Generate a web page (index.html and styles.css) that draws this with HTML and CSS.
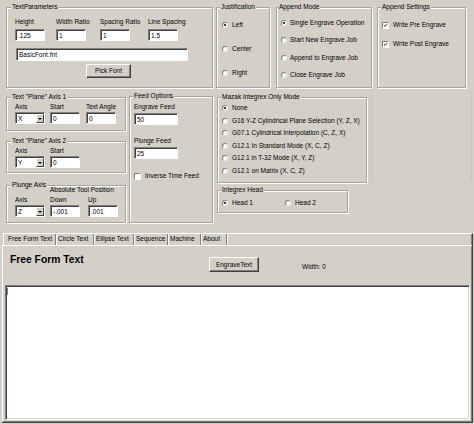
FILE: index.html
```html
<!DOCTYPE html>
<html>
<head>
<meta charset="utf-8">
<title>Engrave</title>
<link rel="stylesheet" href="styles.css">
</head>
<body>
<div class="row1">
  <div class="group g-tp">
    <div class="legend">TextParameters</div>
    <div class="tp-grid">
      <div class="lbl">Height</div>
      <div class="lbl">Width Ratio</div>
      <div class="lbl">Spacing Ratio</div>
      <div class="lbl">Line Spacing</div>
      <div class="tb w30">.125</div>
      <div class="tb w30">1</div>
      <div class="tb w30">1</div>
      <div class="tb w30">1.5</div>
    </div>
    <div class="tb font-in">BasicFont.fnt</div>
    <div class="btn pick">Pick Font</div>
  </div>
  <div class="group g-just">
    <div class="legend">Justification</div>
    <div class="radios">
      <div class="opt"><span class="radio on"></span>Left</div>
      <div class="opt"><span class="radio"></span>Center</div>
      <div class="opt"><span class="radio"></span>Right</div>
    </div>
  </div>
  <div class="group g-append">
    <div class="legend">Append Mode</div>
    <div class="radios">
      <div class="opt"><span class="radio on"></span>Single Engrave Operation</div>
      <div class="opt"><span class="radio"></span>Start New Engrave Job</div>
      <div class="opt"><span class="radio"></span>Append to Engrave Job</div>
      <div class="opt"><span class="radio"></span>Close Engrave Job</div>
    </div>
  </div>
  <div class="group g-aset">
    <div class="legend">Append Settings</div>
    <div class="radios">
      <div class="opt"><span class="chk"><svg viewBox="0 0 7 7"><polyline points="1.2,3.2 2.8,4.8 5.8,1.6" fill="none" stroke="#000" stroke-width="1.2"/></svg></span>Write Pre Engrave</div>
      <div class="opt"><span class="chk"><svg viewBox="0 0 7 7"><polyline points="1.2,3.2 2.8,4.8 5.8,1.6" fill="none" stroke="#000" stroke-width="1.2"/></svg></span>Write Post Engrave</div>
    </div>
  </div>
</div>

<div class="row2">
  <div class="col-left">
    <div class="group g-ax1">
      <div class="legend">Text "Plane" Axis 1</div>
      <div class="ax-grid">
        <div class="lbl">Axis</div>
        <div class="lbl">Start</div>
        <div class="lbl">Text Angle</div>
        <div class="tb sel">X<span class="dd"></span></div>
        <div class="tb w30">0</div>
        <div class="tb w30">0</div>
      </div>
    </div>
    <div class="group g-ax2">
      <div class="legend">Text "Plane" Axis 2</div>
      <div class="ax-grid">
        <div class="lbl">Axis</div>
        <div class="lbl">Start</div>
        <div class="lbl"></div>
        <div class="tb sel">Y<span class="dd"></span></div>
        <div class="tb w30">0</div>
      </div>
    </div>
    <div class="group g-plunge">
      <div class="legend">Plunge Axis</div>
      <div class="atp">Absolute Tool Position</div>
      <div class="ax-grid pl-grid">
        <div class="lbl">Axis</div>
        <div class="lbl">Down</div>
        <div class="lbl">Up</div>
        <div class="tb sel">Z<span class="dd"></span></div>
        <div class="tb w30">-.001</div>
        <div class="tb w30">.001</div>
      </div>
    </div>
  </div>

  <div class="group g-feed">
    <div class="legend">Feed Options</div>
    <div class="feed-body">
      <div class="lbl f-l1">Engrave Feed</div>
      <div class="tb feed-in">50</div>
      <div class="lbl f-l2">Plunge Feed</div>
      <div class="tb feed-in">25</div>
      <div class="opt f-chk"><span class="chk"></span>Inverse Time Feed</div>
    </div>
  </div>

  <div class="col-mid">
    <div class="group g-mazak">
      <div class="legend">Mazak Integrex Only Mode</div>
      <div class="radios">
        <div class="opt"><span class="radio on"></span>None</div>
        <div class="opt"><span class="radio"></span>G16 Y-Z Cylindrical Plane Selection (Y, Z, X)</div>
        <div class="opt"><span class="radio"></span>G07.1 Cylindrical Interpolation (C, Z, X)</div>
        <div class="opt"><span class="radio"></span>G12.1 In Standard Mode (X, C, Z)</div>
        <div class="opt"><span class="radio"></span>G12.1 in T-32 Mode (X, Y, Z)</div>
        <div class="opt"><span class="radio"></span>G12.1 on Matrix (X, C, Z)</div>
      </div>
    </div>
    <div class="group g-head">
      <div class="legend">Integrex Head</div>
      <div class="head-row">
        <div class="opt h1"><span class="radio on"></span>Head 1</div>
        <div class="opt"><span class="radio"></span>Head 2</div>
      </div>
    </div>
  </div>

  <div class="col-right"></div>
</div>

<div class="tabctl">
  <div class="tabs">
    <div class="tab t1 active">Free Form Text</div>
    <div class="tab t2">Circle Text</div>
    <div class="tab t3">Ellipse Text</div>
    <div class="tab t4">Sequence</div>
    <div class="tab t5">Machine</div>
    <div class="tab t6">About</div>
  </div>
  <div class="panel">
    <div class="panel-top">
      <div class="heading">Free Form Text</div>
      <div class="btn engrave">EngraveText</div>
      <div class="width-lbl">Width: 0</div>
    </div>
    <div class="textarea"><span class="caret"></span></div>
  </div>
</div>
</body>
</html>
```

FILE: styles.css
```css
* { box-sizing: border-box; }
html, body { margin: 0; padding: 0; }
body {
  width: 474px;
  height: 424px;
  overflow: hidden;
  background: #d4d0c8;
  font-family: "Liberation Sans", Arial, sans-serif;
  font-size: 6.5px;
  line-height: 8px;
  color: #000;
}

/* generic controls */
.group {
  border: 1px solid #a9a59d;
  box-shadow: inset 1px 1px 0 #fff, 1px 1px 0 #fff;
}
.legend {
  width: max-content;
  height: 8px;
  line-height: 8px;
  margin-top: -5px;
  margin-left: 3px;
  padding: 0 1px;
  background: #d4d0c8;
  white-space: nowrap;
}
.lbl { height: 8px; white-space: nowrap; }
.tb {
  height: 12px;
  background: #fff;
  border: 1px solid;
  border-color: #808080 #fff #fff #808080;
  box-shadow: inset 1px 1px 0 #404040;
  padding: 2px 0 0 2px;
  line-height: 8px;
  white-space: nowrap;
  overflow: hidden;
}
.w30 { width: 30px; }
.sel { width: 30px; position: relative; }
.dd {
  position: absolute;
  right: 0;
  top: 1px;
  width: 8px;
  height: 9px;
  background: #d4d0c8;
  border: 1px solid;
  border-color: #fff #404040 #404040 #fff;
}
.dd::after {
  content: "";
  position: absolute;
  left: 1px;
  top: 3px;
  border-left: 2px solid transparent;
  border-right: 2px solid transparent;
  border-top: 2px solid #000;
}
.btn {
  display: flex;
  align-items: center;
  justify-content: center;
  background: #d4d0c8;
  border: 1px solid;
  border-color: #fff #404040 #404040 #fff;
  box-shadow: inset -1px -1px 0 #808080;
  white-space: nowrap;
}
.radios { display: flex; flex-direction: column; }
.opt {
  display: flex;
  align-items: center;
  height: 8px;
  gap: 4px;
  white-space: nowrap;
}
.radio {
  flex: none;
  width: 6px;
  height: 6px;
  border-radius: 50%;
  background: #fff;
  border: 1px solid;
  border-color: #808080 #e8e8e8 #e8e8e8 #808080;
  position: relative;
}
.radio.on::after {
  content: "";
  position: absolute;
  left: 1px;
  top: 1px;
  width: 2px;
  height: 2px;
  border-radius: 50%;
  background: #000;
}
.chk {
  flex: none;
  width: 7px;
  height: 7px;
  background: #fff;
  border: 1px solid;
  border-color: #808080 #fff #fff #808080;
  display: flex;
}
.chk svg { width: 5px; height: 5px; display: block; }

/* row 1 */
.row1 {
  display: flex;
  align-items: stretch;
  height: 81px;
  margin-top: 7px;
  padding-left: 6px;
}
.g-tp { width: 207px; margin-right: 3px; }
.g-tp .legend { margin-left: 4px; }
.tp-grid {
  display: grid;
  grid-template-columns: 41px 44px 48px 40px;
  row-gap: 3px;
  margin: 7px 0 0 8px;
}
.font-in { width: 172px; height: 13px; margin: 7px 0 0 9px; }
.pick { width: 45px; height: 14px; margin: 3px 0 0 79px; }

.g-just { width: 54px; margin-right: 6px; }
.g-just .radios { margin-top: 10px; padding-left: 5px; gap: 16px; }

.g-append { width: 96px; margin-right: 5px; }
.g-append .legend { margin-left: 1px; }
.g-append .radios { margin-top: 8px; padding-left: 4px; gap: 9.33px; }
.g-append .opt { gap: 3px; }

.g-aset { width: 89px; }
.g-aset .radios { margin-top: 10px; padding-left: 4px; gap: 11px; }

/* row 2 */
.row2 {
  display: flex;
  align-items: flex-start;
  margin-top: 8px;
  padding-left: 6px;
}
.col-left { width: 120px; display: flex; flex-direction: column; }
.g-ax1 { margin-top: 1px; height: 34px; }
.g-ax2 { margin-top: 10px; height: 32px; }
.g-plunge { margin-top: 12px; height: 38px; }
.col-left .legend { margin-left: 4px; }
.ax-grid {
  display: grid;
  grid-template-columns: 35px 36px 30px;
  row-gap: 1px;
  margin: 2px 0 0 8px;
}
.atp { margin: -3px 0 0 43px; height: 8px; white-space: nowrap; }
.pl-grid { grid-template-columns: 35px 38px 30px; }

.g-feed { margin-left: 3px; width: 84px; height: 127px; }
.feed-body { padding-left: 4px; }
.f-l1 { margin-top: 3px; }
.feed-in { width: 44px; margin-top: 2px; }
.f-l2 { margin-top: 12px; }
.f-chk { margin-top: 13px; }

.col-mid { margin-left: 4px; display: flex; flex-direction: column; }
.g-mazak { margin-top: 1px; width: 150px; height: 86px; }
.g-mazak .radios { margin-top: 3px; padding-left: 4px; gap: 4.6px; }
.g-head { margin-top: 7px; width: 131px; height: 23px; }
.head-row { display: flex; margin-top: 5px; padding-left: 4px; }
.h1 { width: 63px; }

.col-right {
  margin-left: 4px;
  margin-top: -8px;
  width: 101px;
  height: 94px;
  border-left: 1px solid #cbc7bf;
  border-right: 1px solid #cbc7bf;
}

/* tab control */
.tabctl {
  margin: 10px 0 0 2px;
  width: 471px;
  height: 190px;
  border-top: 1px solid #fff;
  border-right: 1px solid #404040;
  border-bottom: 1px solid #404040;
  box-shadow: inset -1px -1px 0 #808080;
  display: flex;
  flex-direction: column;
}
.tabs { display: flex; height: 11px; padding-left: 1px; }
.tab {
  height: 11px;
  line-height: 10px;
  padding-left: 2px;
  border-right: 1px solid #808080;
  box-shadow: 1px 0 0 #fff;
  white-space: nowrap;
}
.t1 { width: 53px; padding-left: 5px; }
.t2 { width: 38px; }
.t3 { width: 40px; }
.t4 { width: 34px; }
.t5 { width: 33px; }
.t6 { width: 26px; }
.tab.active { border-left: 1px solid #fff; padding-left: 4px; }

.panel {
  flex: 1;
  border-top: 1px solid #fff;
  border-left: 1px solid #fff;
  padding: 8px 0 0 7px;
}
.panel-top { display: flex; align-items: flex-start; height: 18px; }
.heading {
  width: 199px;
  font-size: 10.3px;
  font-weight: bold;
  line-height: 12px;
}
.engrave { width: 50px; height: 15px; margin-top: 3px; }
.width-lbl { margin: 9px 0 0 43px; }

.textarea {
  position: relative;
  margin: 13px 0 0 -5px;
  width: 465px;
  height: 135px;
  background: #fff;
  border: 1px solid;
  border-color: #808080 #fff #fff #808080;
  box-shadow: inset 1px 1px 0 #404040, inset -1px -1px 0 #d4d0c8;
}
.caret {
  position: absolute;
  left: 1px;
  top: 2px;
  width: 1px;
  height: 7px;
  background: #808080;
}
```
